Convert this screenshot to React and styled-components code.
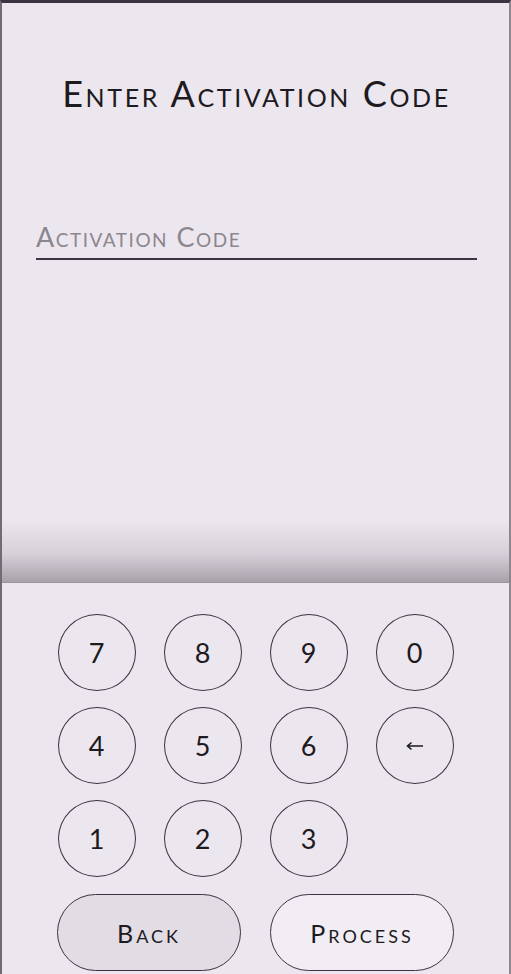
import React, { useState } from "react"
import styled, { createGlobalStyle } from "styled-components"

const GlobalStyle = createGlobalStyle`
  html, body {
    margin: 0;
    padding: 0;
    background: #ece6ee;
  }
  * {
    box-sizing: border-box;
  }
`

const Screen = styled.div`
  display: flex;
  flex-direction: column;
  width: 511px;
  height: 974px;
  background: #ece6ee;
  border-top: 3px solid #3a3540;
  border-left: 2px solid #716b74;
  border-right: 2px solid #8d8790;
  font-family: Lato, "Open Sans", sans-serif;
  color: #1d1a20;
  overflow: hidden;
`

const Upper = styled.section`
  position: relative;
  display: flex;
  flex-direction: column;
  height: 580px;
  padding: 68px 32px 0 34px;

  /* soft shade sitting on the bottom edge of the form area */
  &::after {
    content: "";
    position: absolute;
    left: 0;
    right: 0;
    bottom: 0;
    height: 62px;
    background: linear-gradient(
      to bottom,
      rgba(236, 230, 238, 0) 0%,
      rgba(200, 192, 202, 0.6) 55%,
      #a9a1aa 100%
    );
    border-bottom: 1px solid #9c949d;
  }
`

const Title = styled.h1`
  margin: 0;
  text-align: center;
  font-size: 36px;
  font-weight: 400;
  font-variant: small-caps;
  letter-spacing: 2.6px;
  line-height: 44px;
  color: #1d1a20;
`

const CodeInput = styled.input`
  margin-top: 105px;
  width: 100%;
  height: 40px;
  padding: 0 0 5px 0;
  background: transparent;
  border: none;
  border-bottom: 2px solid #3c3640;
  outline: none;
  font-family: Lato, "Open Sans", sans-serif;
  font-size: 27px;
  font-variant: small-caps;
  letter-spacing: 1.5px;
  color: #1d1a20;

  &::placeholder {
    color: #8c868e;
  }
`

const Keypad = styled.section`
  display: flex;
  flex-direction: column;
  align-items: center;
  padding-top: 31px;
`

const KeyGrid = styled.div`
  display: grid;
  grid-template-columns: repeat(4, 78px);
  grid-auto-rows: 77px;
  column-gap: 28px;
  row-gap: 16px;
`

const Key = styled.button`
  width: 78px;
  height: 77px;
  border-radius: 50%;
  border: 1.5px solid #3a3540;
  background: transparent;
  display: flex;
  align-items: center;
  justify-content: center;
  padding: 0;
  font-family: Lato, "Open Sans", sans-serif;
  font-size: 27px;
  font-weight: 400;
  color: #1d1a20;
  cursor: pointer;
`

const Actions = styled.div`
  display: grid;
  grid-template-columns: repeat(2, 184px);
  column-gap: 29px;
  margin-top: 17px;
`

const ActionButton = styled.button`
  height: 77px;
  border-radius: 39px;
  border: 1.5px solid #3a3540;
  background: ${props => (props.$muted ? "#e2dce4" : "#f2edf4")};
  font-family: Lato, "Open Sans", sans-serif;
  font-size: 25px;
  font-variant: small-caps;
  letter-spacing: 3px;
  color: #1d1a20;
  cursor: pointer;
`

const keys = ["7", "8", "9", "0", "4", "5", "6", "back", "1", "2", "3"]

const BackArrow = () => (
  <svg width="18" height="10" viewBox="0 0 18 10" fill="none">
    <path d="M17 5H2M5.5 1.5L1.5 5L5.5 8.5" stroke="#1d1a20" strokeWidth="1.6" />
  </svg>
)

const App = () => {
  const [code, setCode] = useState("")

  const press = k => {
    if (k === "back") setCode(c => c.slice(0, -1))
    else setCode(c => c + k)
  }

  return (
    <Screen>
      <GlobalStyle />
      <Upper>
        <Title>Enter Activation Code</Title>
        <CodeInput
          placeholder="Activation Code"
          value={code}
          onChange={e => setCode(e.target.value)}
        />
      </Upper>
      <Keypad>
        <KeyGrid>
          {keys.map(k => (
            <Key key={k} onClick={() => press(k)}>
              {k === "back" ? <BackArrow /> : k}
            </Key>
          ))}
        </KeyGrid>
        <Actions>
          <ActionButton $muted onClick={() => setCode("")}>Back</ActionButton>
          <ActionButton>Process</ActionButton>
        </Actions>
      </Keypad>
    </Screen>
  )
}

export default App
